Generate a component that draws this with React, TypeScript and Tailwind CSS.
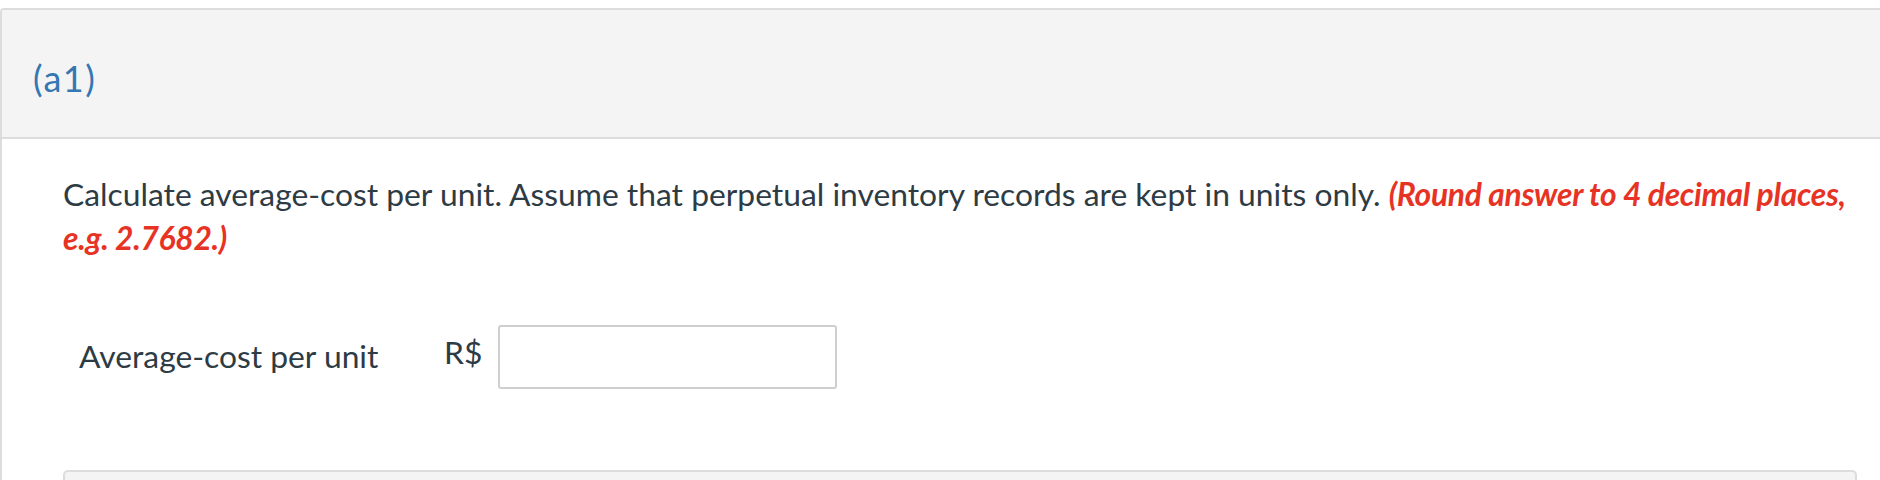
export default function App() {
  return (
    <div className="w-[1880px] h-[480px] overflow-hidden bg-white pt-[8px] font-['Lato',sans-serif]">
      <div className="border-2 border-r-0 border-[#dcdcdc] rounded-tl-[4px] h-[600px]">
        <div className="h-[129px] bg-[#f4f4f4] border-b-2 border-[#dcdcdc] flex items-center pl-[31px] pt-[8px]">
          <h2 className="text-[36px] tracking-[1.5px] text-[#3477b2] leading-none">(a1)</h2>
        </div>
        <div className="pl-[61px] pr-[23px] pt-[33px]">
          <p className="text-[31.8px] leading-[44px] text-[#2d3b45]">
            Calculate average-cost per unit. Assume that perpetual inventory records are kept in units only.{" "}
            <span className="font-bold italic tracking-[-0.3px] text-[#e73324]">(Round answer to 4 decimal places, e.g. 2.7682.)</span>
          </p>
          <div className="flex items-center mt-[65px] pl-[16px] text-[31.8px] text-[#2d3b45]">
            <span className="w-[365px]">Average-cost per unit</span>
            <span className="w-[54px] mb-[8px]">R$</span>
            <input type="text" className="w-[339px] h-[64px] border-2 border-[#cfcfcf] rounded-[3px] bg-white outline-none" />
          </div>
          <div className="mt-[81px] h-[60px] bg-[#f4f4f4] border-2 border-[#dcdcdc] rounded-t-[5px]"></div>
        </div>
      </div>
    </div>
  );
}
